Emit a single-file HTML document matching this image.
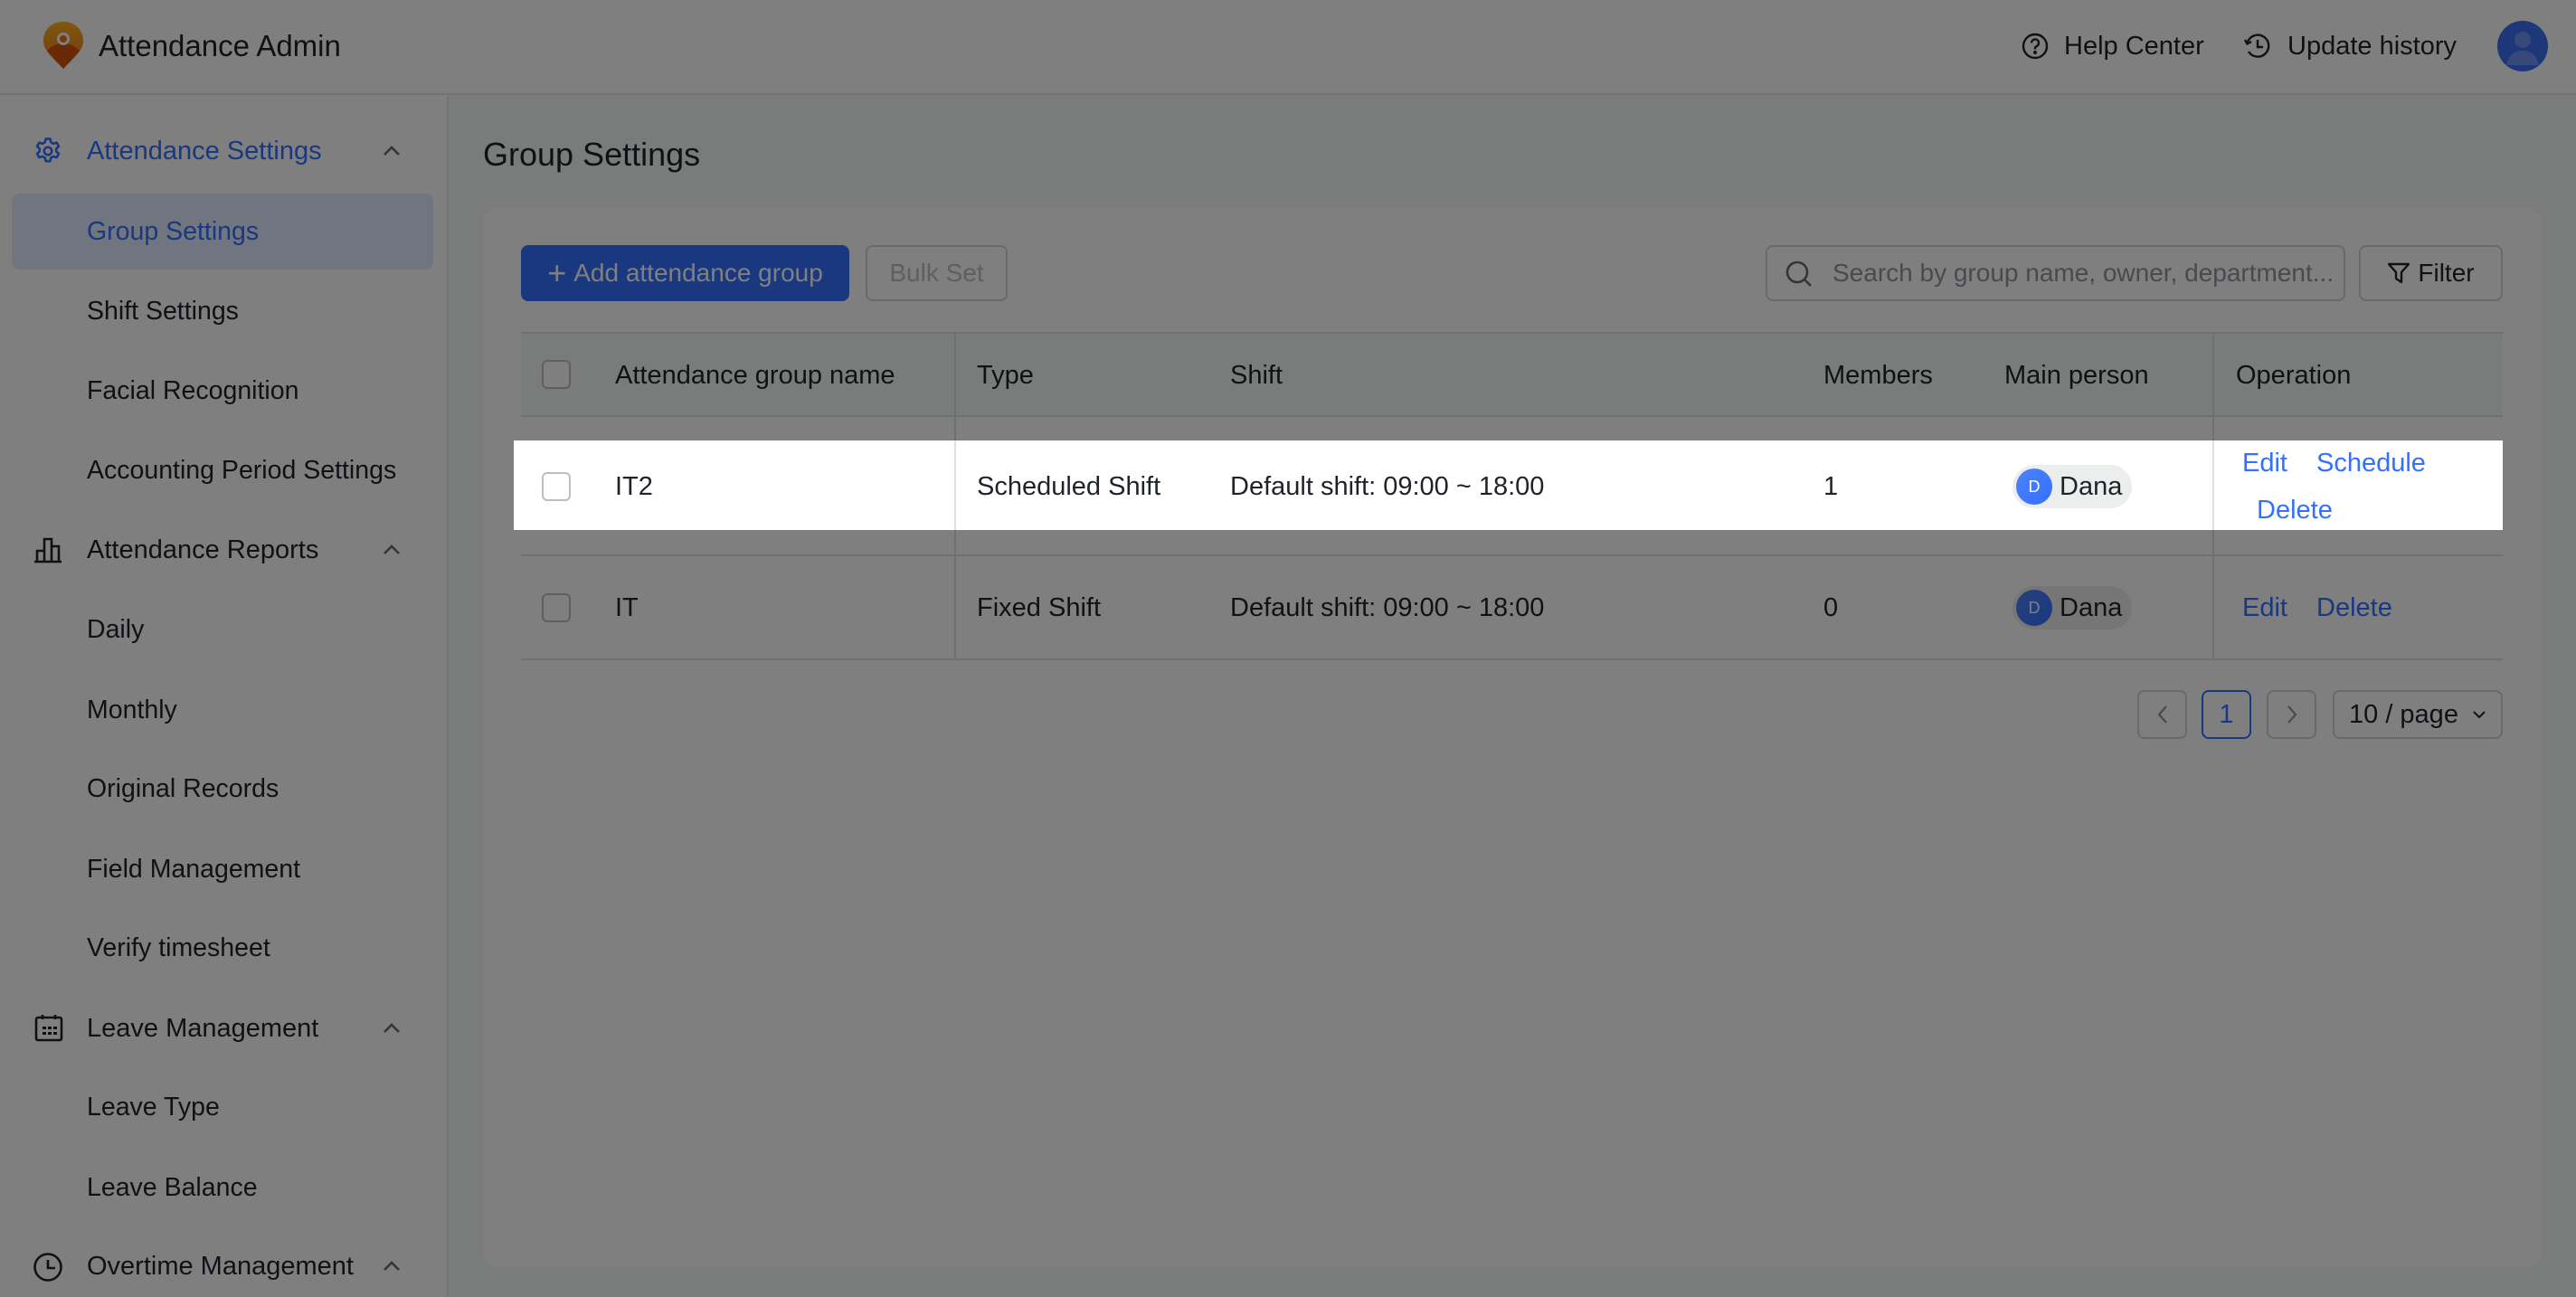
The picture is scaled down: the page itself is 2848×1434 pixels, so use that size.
<!DOCTYPE html>
<html><head><meta charset="utf-8"><style>
*{box-sizing:border-box;margin:0;padding:0}
body{width:2848px;height:1434px;overflow:hidden;background:#f5f6f7;font-family:"Liberation Sans",sans-serif;color:#1f2329;position:relative}
.abs{position:absolute}
.top{left:0;top:0;width:2848px;height:105px;background:#fff;border-bottom:2px solid #e6e7e9}
.side{left:0;top:105px;width:496px;height:1329px;background:#fff;border-right:2px solid #e6e7e9}
.mi{position:absolute;left:96px;font-size:28.5px;line-height:40px;color:#1f2329;white-space:nowrap}
.grp{font-size:29px}
.chev{position:absolute;left:422px;width:22px;height:22px}
.card{left:534px;top:229px;width:2276px;height:1171px;background:#fff;border-radius:16px}
.btn{position:absolute;border-radius:8px;font-size:28px;display:flex;align-items:center;justify-content:center}
.th{position:absolute;font-size:29px;color:#1f2329;top:398px;line-height:34px}
.td{position:absolute;font-size:29px;color:#1f2329;line-height:34px;white-space:nowrap}
.cb{position:absolute;width:32px;height:32px;border:2px solid #bbbfc4;border-radius:6px;background:#fff}
.link{color:#3370ff}
.chip{position:absolute;height:48px;width:132px;border-radius:24px;background:#eceded}
.chip .av{position:absolute;left:4px;top:4px;width:40px;height:40px;border-radius:50%;background:linear-gradient(135deg,#4e83fd,#3370ff);color:#fff;font-size:18px;text-align:center;line-height:40px}
.chip .nm{position:absolute;left:52px;top:7px;font-size:29px;line-height:34px}
.pg{position:absolute;top:763px;height:54px;border:2px solid #d0d3d6;border-radius:8px;display:flex;align-items:center;justify-content:center;font-size:29px;color:#8f959e}
.ov{left:0;top:0;width:2848px;height:1434px;background:rgba(0,0,0,0.5)}
</style></head><body>

<div class="abs top"></div>
<svg class="abs" style="left:44px;top:22px" width="52" height="56" viewBox="0 0 52 56"><defs><linearGradient id="lg" x1="0" y1="0" x2="0" y2="1"><stop offset="0" stop-color="#ffb01f"/><stop offset="1" stop-color="#e8741a"/></linearGradient></defs><path d="M26 2C13 2 4 11 4 23c0 10 8 17 22 31C40 40 48 33 48 23 48 11 39 2 26 2z" fill="url(#lg)"/><path d="M8 34c6-6 12-8 18-8s12 2 18 8L26 54z" fill="#d4520d"/><circle cx="26" cy="21" r="7" fill="#fff"/><circle cx="26" cy="21" r="4" fill="#e8741a"/></svg>
<div class="abs" style="left:109px;top:32px;font-size:33px;line-height:38px;font-weight:500">Attendance Admin</div>

<svg class="abs" style="left:2234px;top:35px" width="32" height="32" viewBox="0 0 32 32" fill="none" stroke="#1f2329" stroke-width="2.4"><circle cx="16" cy="16" r="13"/><path d="M12 12.5a4 4 0 1 1 5.5 3.7c-1 .4-1.5 1.2-1.5 2.3v1"/><circle cx="16" cy="23" r="0.8" fill="#1f2329"/></svg>
<div class="abs" style="left:2282px;top:33px;font-size:29px;line-height:36px">Help Center</div>
<svg class="abs" style="left:2480px;top:35px" width="32" height="32" viewBox="0 0 32 32" fill="none" stroke="#1f2329" stroke-width="2.4"><path d="M4.5 13A12 12 0 1 1 6 22"/><path d="M2 9l2.5 4.5L9 11"/><path d="M16 9v8h6"/></svg>
<div class="abs" style="left:2529px;top:33px;font-size:29px;line-height:36px">Update history</div>
<svg class="abs" style="left:2760px;top:22px" width="58" height="58" viewBox="0 0 58 58"><circle cx="29" cy="29" r="28" fill="#3a6ef0"/><circle cx="29" cy="22" r="9" fill="#6d93f3"/><path d="M11 50c2-11 9-16 18-16s16 5 18 16z" fill="#6d93f3"/></svg>

<div class="abs side"></div>
<div class="abs" style="left:13px;top:214px;width:466px;height:84px;background:#e1eaff;border-radius:8px"></div>
<svg class="abs" style="left:36px;top:150px" width="34" height="34" viewBox="0 0 24 24" fill="none" stroke="#3370ff" stroke-width="1.8"><circle cx="12" cy="12" r="3"/><path d="M10.3 2.5h3.4l.6 2.6 1.9 1.1 2.6-.8 1.7 2.9-2 1.8v2.2l2 1.8-1.7 2.9-2.6-.8-1.9 1.1-.6 2.6h-3.4l-.6-2.6-1.9-1.1-2.6.8-1.7-2.9 2-1.8v-2.2l-2-1.8 1.7-2.9 2.6.8 1.9-1.1z" stroke-linejoin="round"/></svg>
<div class="mi grp" style="top:147px;color:#3370ff;font-weight:500">Attendance Settings</div>
<svg class="chev" style="top:156px" viewBox="0 0 22 22"><path d="M3 15l8-8 8 8" fill="none" stroke="#646a73" stroke-width="2.6"/></svg>
<div class="mi" style="top:236px;color:#3370ff;font-weight:500">Group Settings</div>
<div class="mi" style="top:324px">Shift Settings</div>
<div class="mi" style="top:412px">Facial Recognition</div>
<div class="mi" style="top:500px">Accounting Period Settings</div>
<svg class="abs" style="left:36px;top:590px" width="34" height="34" viewBox="0 0 34 34" fill="none" stroke="#1f2329" stroke-width="2.6"><path d="M2 31h30M5 31V19h8v12M13 31V6h8v25M21 31V14h8v17"/></svg>
<div class="mi grp" style="top:588px">Attendance Reports</div>
<svg class="chev" style="top:597px" viewBox="0 0 22 22"><path d="M3 15l8-8 8 8" fill="none" stroke="#646a73" stroke-width="2.6"/></svg>
<div class="mi" style="top:676px">Daily</div>
<div class="mi" style="top:765px">Monthly</div>
<div class="mi" style="top:852px">Original Records</div>
<div class="mi" style="top:941px">Field Management</div>
<div class="mi" style="top:1028px">Verify timesheet</div>
<svg class="abs" style="left:38px;top:1121px" width="32" height="32" viewBox="0 0 32 32" fill="none" stroke="#1f2329" stroke-width="2.6"><rect x="2" y="4" width="28" height="25" rx="2"/><path d="M9 1v5M23 1v5" /><g fill="#1f2329" stroke="none"><rect x="9" y="14" width="4" height="3"/><rect x="15" y="14" width="4" height="3"/><rect x="21" y="14" width="4" height="3"/><rect x="9" y="20" width="4" height="3"/><rect x="15" y="20" width="4" height="3"/><rect x="21" y="20" width="4" height="3"/></g></svg>
<div class="mi grp" style="top:1117px">Leave Management</div>
<svg class="chev" style="top:1126px" viewBox="0 0 22 22"><path d="M3 15l8-8 8 8" fill="none" stroke="#646a73" stroke-width="2.6"/></svg>
<div class="mi" style="top:1204px">Leave Type</div>
<div class="mi" style="top:1293px">Leave Balance</div>
<svg class="abs" style="left:36px;top:1384px" width="34" height="34" viewBox="0 0 34 34" fill="none" stroke="#1f2329" stroke-width="2.6"><circle cx="17" cy="17" r="14.5"/><path d="M17 9v9h8"/></svg>
<div class="mi grp" style="top:1380px">Overtime Management</div>
<svg class="chev" style="top:1389px" viewBox="0 0 22 22"><path d="M3 15l8-8 8 8" fill="none" stroke="#646a73" stroke-width="2.6"/></svg>

<div class="abs" style="left:534px;top:150px;font-size:36px;line-height:42px;font-weight:500">Group Settings</div>
<div class="abs card"></div>
<div class="btn" style="left:576px;top:271px;width:363px;height:62px;background:#3370ff;color:#fff"><span style="font-size:36px;margin-right:8px;font-weight:300">+</span>Add attendance group</div>
<div class="btn" style="left:957px;top:271px;width:157px;height:62px;border:2px solid #d0d3d6;color:#bbbfc4">Bulk Set</div>
<div class="btn" style="left:1952px;top:271px;width:641px;height:62px;border:2px solid #d0d3d6;justify-content:flex-start;color:#8f959e;padding-left:72px">Search by group name, owner, department...</div>
<svg class="abs" style="left:1973px;top:287px" width="32" height="32" viewBox="0 0 32 32" fill="none" stroke="#646a73" stroke-width="2.6"><circle cx="14" cy="14" r="11"/><path d="M22 22l7 7"/></svg>
<div class="btn" style="left:2608px;top:271px;width:159px;height:62px;border:2px solid #d0d3d6;color:#1f2329"><svg width="26" height="26" viewBox="0 0 26 26" fill="none" stroke="#1f2329" stroke-width="2.4" style="margin-right:8px"><path d="M2 3h22l-8 9v11l-6-4v-7z" stroke-linejoin="round"/></svg>Filter</div>

<div class="abs" style="left:576px;top:367px;width:2191px;height:94px;background:#f5f6f7;border-top:2px solid #dee0e3;border-bottom:2px solid #dee0e3"></div>
<div class="abs" style="left:1055px;top:367px;width:2px;height:362px;background:#dee0e3"></div>
<div class="abs" style="left:2446px;top:367px;width:2px;height:362px;background:#dee0e3"></div>
<div class="abs" style="left:576px;top:613px;width:2191px;height:2px;background:#dee0e3"></div>
<div class="abs" style="left:576px;top:728px;width:2191px;height:2px;background:#dee0e3"></div>
<div class="cb" style="left:599px;top:398px"></div>
<div class="th" style="left:680px">Attendance group name</div>
<div class="th" style="left:1080px">Type</div>
<div class="th" style="left:1360px">Shift</div>
<div class="th" style="left:2016px">Members</div>
<div class="th" style="left:2216px">Main person</div>
<div class="th" style="left:2472px">Operation</div>

<div class="cb" style="left:599px;top:656px"></div>
<div class="td" style="left:680px;top:655px">IT</div>
<div class="td" style="left:1080px;top:655px">Fixed Shift</div>
<div class="td" style="left:1360px;top:655px">Default shift: 09:00 ~ 18:00</div>
<div class="td" style="left:2016px;top:655px">0</div>
<div class="chip" style="left:2225px;top:648px"><div class="av">D</div><div class="nm">Dana</div></div>
<div class="td link" style="left:2479px;top:655px">Edit</div>
<div class="td link" style="left:2561px;top:655px">Delete</div>

<div class="pg" style="left:2363px;width:55px"><svg width="14" height="22" viewBox="0 0 14 22"><path d="M11 2L3 11l8 9" fill="none" stroke="#8f959e" stroke-width="2.2"/></svg></div>
<div class="pg" style="left:2434px;width:55px;border-color:#3370ff;color:#3370ff">1</div>
<div class="pg" style="left:2506px;width:55px"><svg width="14" height="22" viewBox="0 0 14 22"><path d="M3 2l8 9-8 9" fill="none" stroke="#8f959e" stroke-width="2.2"/></svg></div>
<div class="pg" style="left:2579px;width:188px;color:#1f2329;justify-content:flex-start;padding-left:16px">10 / page<svg style="position:absolute;right:16px" width="16" height="12" viewBox="0 0 16 12"><path d="M2 3l6 6 6-6" fill="none" stroke="#1f2329" stroke-width="2"/></svg></div>

<div class="abs ov"></div>

<div class="abs" style="left:568px;top:487px;width:2199px;height:99px;background:#fff"></div>
<div class="abs" style="left:1055px;top:487px;width:2px;height:99px;background:#dee0e3"></div>
<div class="abs" style="left:2446px;top:487px;width:2px;height:99px;background:#dee0e3"></div>
<div class="cb" style="left:599px;top:522px"></div>
<div class="td" style="left:680px;top:521px">IT2</div>
<div class="td" style="left:1080px;top:521px">Scheduled Shift</div>
<div class="td" style="left:1360px;top:521px">Default shift: 09:00 ~ 18:00</div>
<div class="td" style="left:2016px;top:521px">1</div>
<div class="chip" style="left:2225px;top:514px"><div class="av">D</div><div class="nm">Dana</div></div>
<div class="td link" style="left:2479px;top:495px">Edit</div>
<div class="td link" style="left:2561px;top:495px">Schedule</div>
<div class="td link" style="left:2495px;top:547px">Delete</div>
</body></html>
